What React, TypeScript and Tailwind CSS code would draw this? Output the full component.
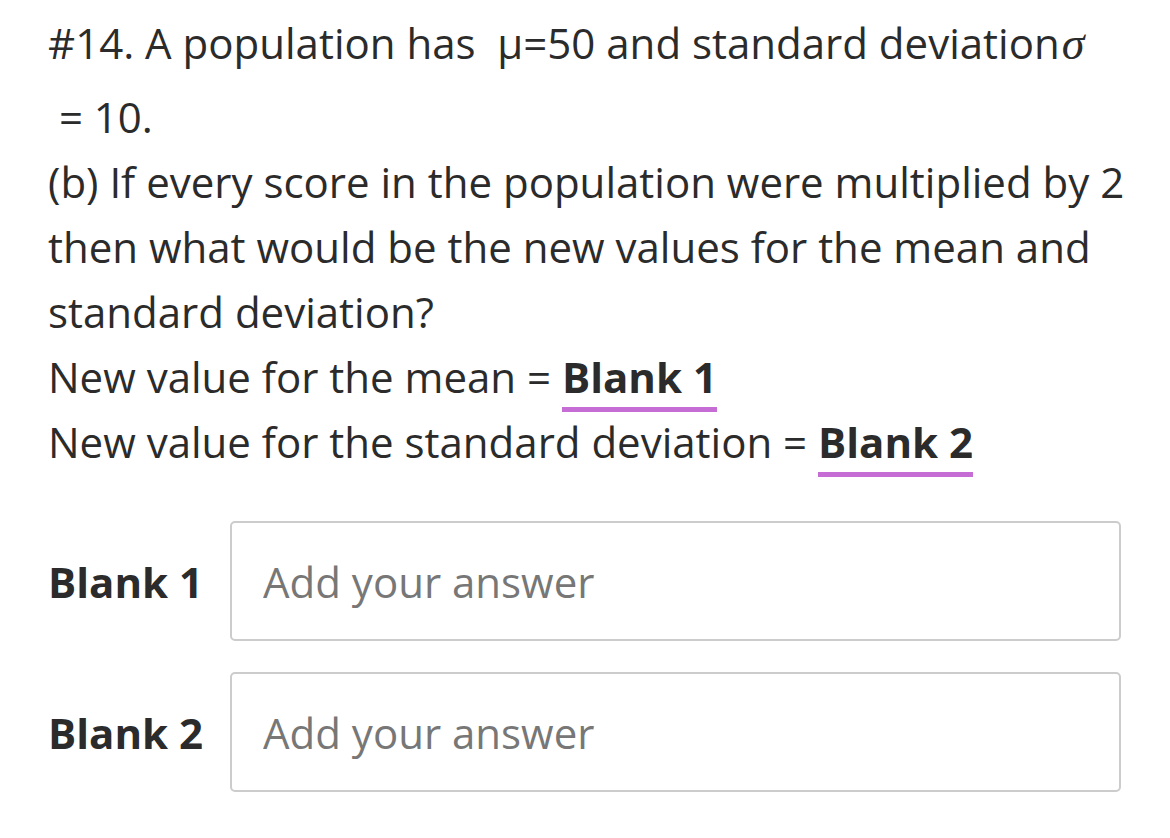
import React from 'react';

const font = { fontFamily: '"Open Sans", "Noto Sans", sans-serif' };

const BlankRef: React.FC<{ label: string }> = ({ label }) => (
  <span className="relative inline-block font-bold">
    {label}
    <span className="absolute left-0 right-0 -bottom-[3px] h-[5px] bg-[#c66cd5]" />
  </span>
);

const BlankInput: React.FC<{ label: string }> = ({ label }) => (
  <div className="flex items-center">
    <div className="w-[182px] shrink-0 font-bold text-[42px] text-[#2b2b2b] whitespace-nowrap">{label}</div>
    <input
      type="text"
      placeholder="Add your answer"
      className="flex-1 h-[120px] border-2 border-[#cccccc] rounded-[5px] px-[31px] text-[42px] text-[#2b2b2b] placeholder:text-[#777777] outline-none"
      style={font}
    />
  </div>
);

const App: React.FC = () => {
  return (
    <div className="min-h-screen bg-white text-[#2b2b2b] pl-[48px] pr-[49px] pt-[10px]" style={font}>
      <div className="text-[42px] leading-[65px] whitespace-nowrap">
        <div>
          #14. A population has&nbsp; μ=50 and standard deviation
          <span className="italic text-[46px] ml-[2px]" style={{ fontFamily: '"Liberation Serif", serif' }}>σ</span>
        </div>
        <div className="mt-[8px]">&nbsp;= 10.</div>
        <div>(b) If every score in the population were multiplied by 2</div>
        <div>then what would be the new values for the mean and</div>
        <div>standard deviation?</div>
        <div>
          New value for the mean = <BlankRef label="Blank 1" />
        </div>
        <div>
          New value for the standard deviation = <BlankRef label="Blank 2" />
        </div>
      </div>
      <div className="mt-[47px] flex flex-col gap-[31px]">
        <BlankInput label="Blank 1" />
        <BlankInput label="Blank 2" />
      </div>
    </div>
  );
};

export default App;
